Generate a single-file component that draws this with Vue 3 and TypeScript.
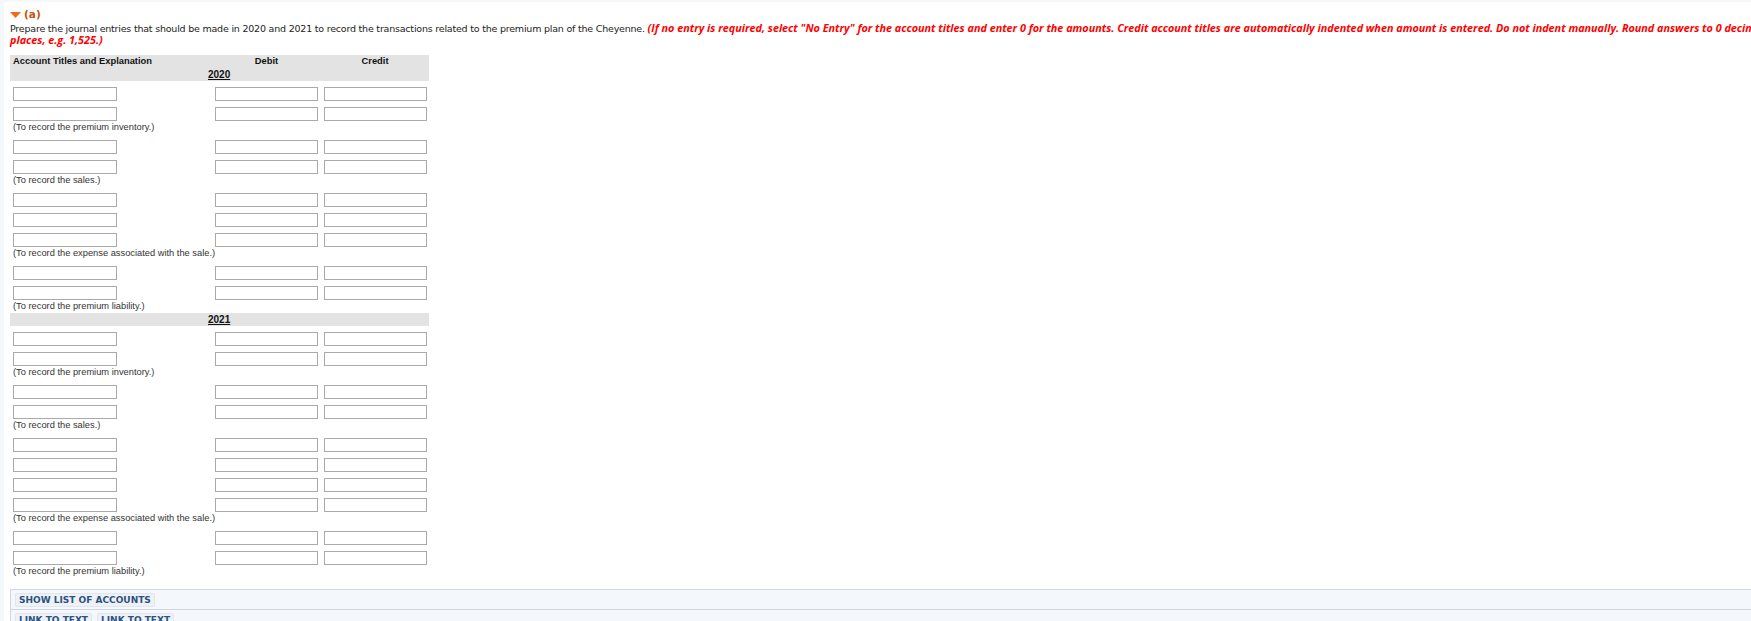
<script setup lang="ts">
interface Group { rows: number; note: string }
const base = (expenseRows: number): Group[] => [
  { rows: 2, note: '(To record the premium inventory.)' },
  { rows: 2, note: '(To record the sales.)' },
  { rows: expenseRows, note: '(To record the expense associated with the sale.)' },
  { rows: 2, note: '(To record the premium liability.)' },
]
const years = [
  { year: '2020', groups: base(3) },
  { year: '2021', groups: base(4) },
]
</script>

<template>
  <div class="page">
    <div class="content">
      <div class="part"><svg class="caret" width="11" height="6" viewBox="0 0 11 6"><path d="M0 0H11L5.5 6Z" fill="#f26a1b" /></svg><span>(a)</span></div>
      <p class="prompt">Prepare the journal entries that should be made in 2020 and 2021 to record the transactions related to the premium plan of the Cheyenne. <em>(If no entry is required, select "No Entry" for the account titles and enter 0 for the amounts. Credit account titles are automatically indented when amount is entered. Do not indent manually. Round answers to 0 decimal places, e.g. 1,525.)</em></p>
      <div class="sheet">
        <template v-for="(y, i) in years" :key="y.year">
          <div class="band" :class="{ first: i === 0 }">
            <div v-if="i === 0" class="heads">
              <span class="h-acc">Account Titles and Explanation</span>
              <span class="h-num">Debit</span>
              <span class="h-num">Credit</span>
            </div>
            <div class="year">{{ y.year }}</div>
          </div>
          <div class="entries">
            <div v-for="g in y.groups" :key="g.note" class="group">
              <div v-for="n in g.rows" :key="n" class="row">
                <input class="f" type="text" />
                <input class="f" type="text" />
                <input class="f" type="text" />
              </div>
              <div class="note">{{ g.note }}</div>
            </div>
          </div>
        </template>
      </div>
      <div class="toolbar">
        <div class="bar"><button class="btn">SHOW LIST OF ACCOUNTS</button></div>
        <div class="bar links"><button class="btn">LINK TO TEXT</button><button class="btn">LINK TO TEXT</button></div>
      </div>
    </div>
  </div>
</template>

<style scoped>
.page {
  height: 621px;
  overflow: hidden;
  background: #f5f8fb;
  padding: 2px 0 0 4px;
  box-sizing: border-box;
}
.content {
  background: #fff;
  height: 619px;
  padding: 6px 0 0 6px;
  box-sizing: border-box;
  overflow: hidden;
}
.part {
  display: flex;
  align-items: center;
  gap: 3px;
  height: 13px;
  font: 700 10.5px/13px "DejaVu Sans", sans-serif;
  color: #c8500f;
}
.prompt {
  margin: 1px 0 0;
  width: 1790px;
  height: 22px;
  font: 400 9.5px/11px "DejaVu Sans", sans-serif;
  letter-spacing: -0.21px;
  color: #222;
}
.prompt em {
  font: italic 700 10.8px/11px "Open Sans", sans-serif;
  letter-spacing: 0;
  color: #f00;
}
.sheet {
  width: 419px;
  margin-top: 11px;
}
.band {
  background: #e3e3e3;
  height: 13px;
}
.band.first {
  height: 26px;
}
.heads {
  display: grid;
  grid-template-columns: 205px 103px 114px;
  height: 13px;
  font: 700 9.35px/13px "Liberation Sans", sans-serif;
  color: #111;
}
.h-acc {
  padding-left: 3px;
}
.h-num {
  text-align: center;
}
.year {
  padding-left: 198px;
  font: 700 10px/13px "Liberation Sans", sans-serif;
  color: #111;
  text-decoration: underline;
}
.entries {
  padding-top: 6px;
}
.row {
  display: grid;
  grid-template-columns: 202px 109px 103px;
  height: 14px;
  margin-bottom: 6px;
  padding-left: 3px;
}
.row:nth-last-child(2) {
  margin-bottom: 0;
}
.f {
  box-sizing: border-box;
  height: 14px;
  width: 103px;
  margin: 0;
  padding: 0;
  border: 1px solid #aaa;
  background: #fff;
  display: block;
}
.f:first-child {
  width: 104px;
}
.note {
  height: 13px;
  margin-bottom: 6px;
  padding-left: 3px;
  font: 400 9.3px/13px "Liberation Sans", sans-serif;
  color: #333;
}
.group:last-child .note {
  margin-bottom: 0;
}
.toolbar {
  margin-top: 11px;
  background: #f4f7fb;
  border-top: 1px solid #d0d7e2;
  border-left: 1px solid #d0d7e2;
}
.bar {
  height: 19px;
  display: flex;
  align-items: center;
  gap: 5px;
  padding-left: 4px;
  border-bottom: 1px solid #d0d7e2;
}
.links {
  align-items: flex-start;
  padding-top: 3px;
}
.btn {
  height: 14px;
  padding: 0 3px;
  border: 1px solid #e2e6ec;
  border-radius: 2px;
  background: #eef1f5;
  font: 700 9px/12px "DejaVu Sans", sans-serif;
  color: #2c5282;
}
</style>
